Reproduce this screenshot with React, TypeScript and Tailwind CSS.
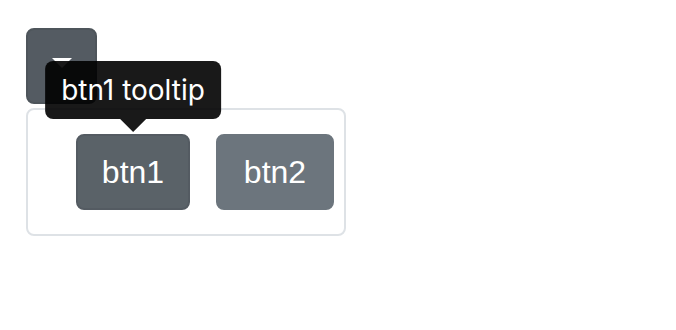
const App = () => {
  return (
    <div className="pl-[26px] pt-[28px] font-['Liberation_Sans',Arial,sans-serif]">
      {/* dropdown toggle, no label */}
      <button className="flex h-[76px] w-[71px] items-center justify-center rounded-[8px] border-2 border-[#4e555b] bg-[#545b62]">
        <span className="mt-[-6px] h-0 w-0 border-x-[10px] border-t-[10px] border-x-transparent border-t-white" />
      </button>

      <div className="mt-[4px] flex w-[320px] gap-[26px] rounded-[8px] border-2 border-[#dee2e6] py-[24px] pl-[48px]">
        <div className="relative">
          <button className="h-[76px] w-[114px] rounded-[8px] border-2 border-[#545b62] bg-[#5a6268] text-[32px] leading-[48px] text-white">
            btn1
          </button>
          {/* tooltip */}
          <div className="absolute bottom-[calc(100%+15px)] left-1/2 -translate-x-1/2">
            <div className="whitespace-nowrap rounded-[8px] bg-black/90 px-[16px] py-[8px] font-['Inter',sans-serif] text-[28px] leading-[42px] text-white">
              btn1 tooltip
            </div>
            <div className="absolute left-1/2 top-full h-0 w-0 -translate-x-1/2 border-x-[13px] border-t-[13px] border-x-transparent border-t-black/90" />
          </div>
        </div>
        <button className="h-[76px] w-[118px] rounded-[8px] border-2 border-[#6c757d] bg-[#6c757d] text-[32px] leading-[48px] text-white">
          btn2
        </button>
      </div>
    </div>
  );
};

export default App;
